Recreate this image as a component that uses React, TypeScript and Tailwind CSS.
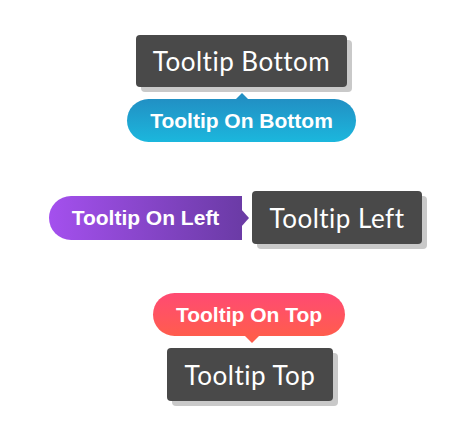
import React from "react";

const btn =
  "h-[52px] rounded-[4px] bg-[#494949] text-white flex items-center justify-center shadow-[5px_5px_0_#c9c9c9] text-[26px] tracking-[0.5px] font-['Lato',sans-serif] leading-none";

const tip =
  "relative h-[43px] rounded-full text-white flex items-center justify-center font-['Liberation_Sans',Arial,sans-serif] font-bold text-[21px] leading-none";

export default function App() {
  return (
    <div className="w-[474px] h-[447px] bg-white overflow-hidden pt-[35px]">
      {/* Row 1 */}
      <div className="ml-[127px] w-[229px] flex flex-col items-center">
        <div className={btn + " w-[211px] h-[51px]"}>Tooltip Bottom</div>
        <div className={tip + " mt-[12px] w-[229px] bg-linear-to-b from-[#2190c4] to-[#1bb7dd]"}>
          <span className="absolute -top-[6px] left-[115px] -translate-x-1/2 w-0 h-0 border-x-[6px] border-x-transparent border-b-[6px] border-b-[#2190c4]" />
          Tooltip On Bottom
        </div>
      </div>

      {/* Row 2 */}
      <div className="ml-[49px] mt-[49px] flex items-center">
        <div className="relative h-[44px] w-[193px] rounded-l-full rounded-r-[14px] text-white flex items-center justify-center font-['Liberation_Sans',Arial,sans-serif] font-bold text-[21px] leading-none bg-linear-to-r from-[#a450ee] to-[#6b3ba6]">
          <span className="absolute -right-[7px] top-1/2 -translate-y-1/2 w-0 h-0 border-y-[9px] border-y-transparent border-l-[8px] border-l-[#6b3ba6]" />
          Tooltip On Left
        </div>
        <div className={btn + " ml-[10px] w-[170px] h-[53px]"}>Tooltip Left</div>
      </div>

      {/* Row 3 */}
      <div className="ml-[153px] mt-[49px] w-[192px] flex flex-col items-center">
        <div className={tip + " w-[192px] bg-linear-to-b from-[#ff4a72] to-[#ff5c4c]"}>
          <span className="absolute -bottom-[7px] left-[99px] -translate-x-1/2 w-0 h-0 border-x-[7px] border-x-transparent border-t-[7px] border-t-[#ff5c4c]" />
          Tooltip On Top
        </div>
        <div className={btn + " mt-[12px] w-[166px] h-[53px] ml-[2px]"}>Tooltip Top</div>
      </div>
    </div>
  );
}
